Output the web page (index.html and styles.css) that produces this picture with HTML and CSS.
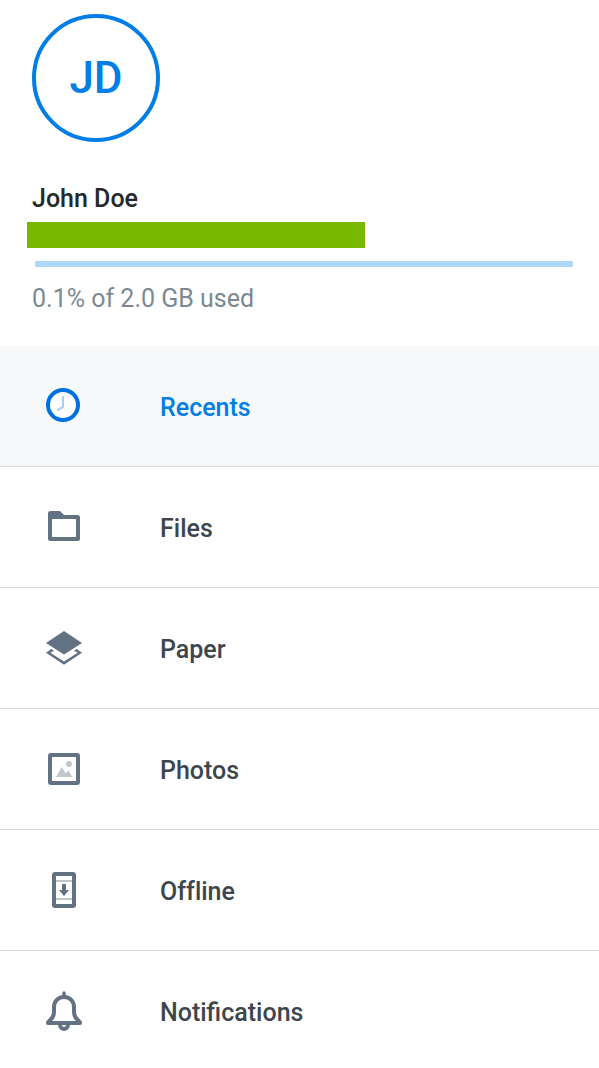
FILE: index.html
```
<!DOCTYPE html>
<html lang="en">
<head>
    <meta charset="UTF-8">
    <meta name="viewport" content="width=device-width, initial-scale=1.0">
    <title>Account</title>
    <link rel="stylesheet" href="styles.css">
</head>
<body>
    <header class="profile">
        <div class="avatar"><span>JD</span></div>
        <div class="name"><span>John Doe</span></div>
        <div class="email-mask"></div>
        <div class="quota-bar"></div>
        <div class="quota-text"><span>0.1% of 2.0 GB used</span></div>
    </header>

    <nav class="menu">
        <a class="menu-item active">
            <svg class="icon" viewBox="0 0 48 48">
                <circle cx="23" cy="23" r="15" fill="#fff" stroke="#0070e0" stroke-width="4"/>
                <path d="M23 14v11l-6 3.300" fill="none" stroke="#a6cff5" stroke-width="2"/>
            </svg>
            <span>Recents</span>
        </a>
        <a class="menu-item">
            <svg class="icon" viewBox="0 0 48 48">
                <path fill="#637282" fill-rule="evenodd" d="M10.500 8H20l4 4h13.500a2.500 2.500 0 0 1 2.500 2.500v21a2.500 2.500 0 0 1-2.500 2.500h-27A2.500 2.500 0 0 1 8 35.500v-25A2.500 2.500 0 0 1 10.500 8zM12 16v18h24V16z"/>
            </svg>
            <span>Files</span>
        </a>
        <a class="menu-item">
            <svg class="icon" viewBox="0 0 48 48">
                <path fill="#637282" d="M24 7l18 12-18 11.500-18-11.500z"/>
                <path fill="#637282" d="M11.400 25L6 28.700l18 12 18-12-5.400-3.700-2.600 1.700 3.600 2L24 37.500 10.400 28.700l3.600-2z"/>
            </svg>
            <span>Paper</span>
        </a>
        <a class="menu-item">
            <svg class="icon" viewBox="0 0 48 48">
                <rect x="10" y="10" width="28" height="28" rx="1" fill="none" stroke="#637282" stroke-width="4"/>
                <path fill="#c1c7cd" d="M16 32l5.700-10 4.200 6.600 2.400-3.300 4 6.700z"/>
                <circle cx="29" cy="19" r="3" fill="#c1c7cd"/>
            </svg>
            <span>Photos</span>
        </a>
        <a class="menu-item offline">
            <svg class="icon" viewBox="0 0 48 48">
                <path fill="#c1c7cd" d="M16 14h16v2H16zM16 32h16v2H16z"/>
                <rect x="14" y="8" width="20" height="32" rx="1" fill="none" stroke="#637282" stroke-width="4"/>
                <path fill="#637282" d="M22 18h4v6h3l-5 6-5-6h3z"/>
            </svg>
            <span>Offline</span>
        </a>
        <a class="menu-item">
            <svg class="icon" viewBox="0 0 48 48">
                <path fill="none" stroke="#637282" stroke-width="4" stroke-linejoin="round" d="M24 10c-5.800 0-10 4.200-10 10v5c0 4.500-2 6.500-6 10.500V36h32v-.5c-4-4-6-6-6-10.500v-5c0-5.800-4.200-10-10-10z"/>
                <path fill="none" stroke="#637282" stroke-width="3.500" stroke-linecap="round" d="M24 6v4"/>
                <path fill="none" stroke="#637282" stroke-width="4" d="M20 37.500a4 4.500 0 0 0 8 0"/>
            </svg>
            <span>Notifications</span>
        </a>
    </nav>
</body>
</html>
```
FILE: styles.css
```
body {
    margin: 0;
    height: 1068px;
    overflow: hidden;
    background-color: #fff;
    font-family: Roboto, "Liberation Sans", sans-serif;
    font-size: 25px;
}

/* Profile header */
.profile {
    box-sizing: border-box;
    height: 346px;
    padding: 14px 26px 0 32px;
}

.avatar {
    box-sizing: border-box;
    width: 128px;
    height: 128px;
    border: 4px solid #007ee5;
    border-radius: 50%;
    display: flex;
    align-items: center;
    justify-content: center;
    color: #007ee5;
    font-size: 44px;
    font-weight: 500;
}

.name {
    height: 30px;
    margin-top: 42px;
    line-height: 30px;
    color: #25282b;
    font-weight: 500;
}

.email-mask {
    width: 338px;
    height: 26px;
    margin: 8px 0 0 -5px;
    background-color: #78b900;
}

.quota-bar {
    height: 6px;
    margin: 13px 0 0 3px;
    background-color: #b0d8f7;
}

.quota-text {
    margin-top: 17px;
    line-height: 30px;
    color: #7b8994;
}

/* Navigation list */
.menu-item {
    display: flex;
    align-items: center;
    height: 120px;
    padding-left: 40px;
    border-bottom: 1px solid #d4d8dc;
    color: #3d464d;
    font-weight: 500;
}

.menu-item span {
    padding-top: 3px;
    line-height: 30px;
}

.menu-item.active {
    background-color: #f7f8fa;
    color: #007ee5;
}

.menu-item.offline span {
    font-variant-ligatures: none;
}

.icon {
    width: 48px;
    height: 48px;
    margin-right: 72px;
}
```
